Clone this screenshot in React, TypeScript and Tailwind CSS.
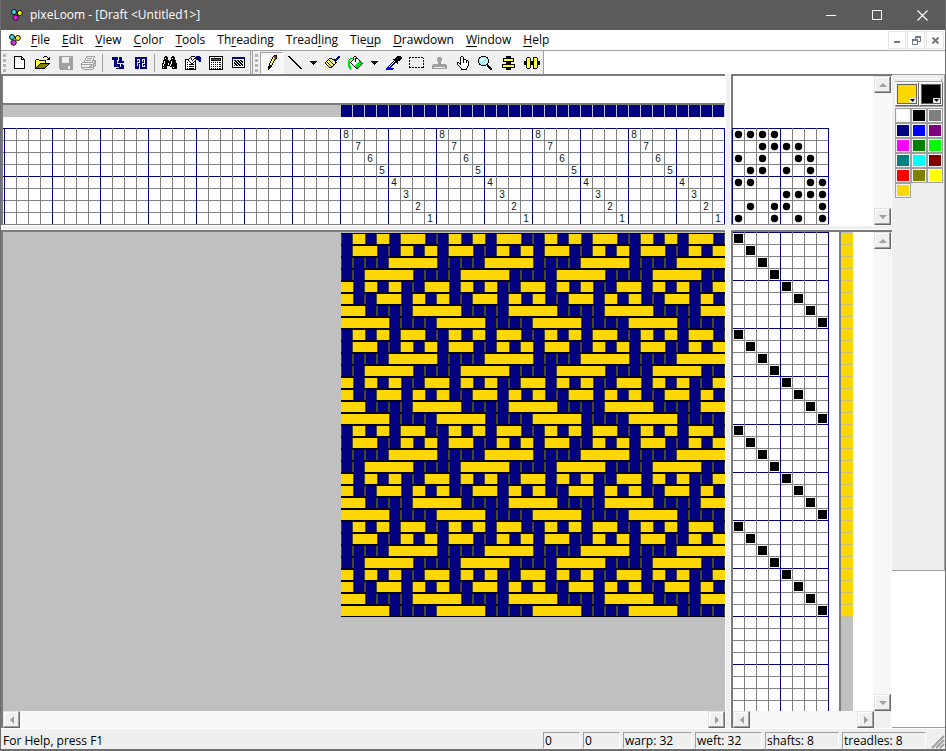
import React from "react";

const NAVY = "#000080";
const GOLD = "#ffd700";

const INK: Record<string, string> = {
  K: "#000000", W: "#ffffff", Y: "#ffff30", O: "#808000", G: "#a0a0a0", N: "#000080",
  B: "#0000e0", R: "#b02020", L: "#00e020", C: "#a8f4f8", D: "#606060",
};

function Pixels({ rows }: { rows: string[] }) {
  const w = Math.max(...rows.map((r) => r.length));
  return (
    <svg width={w} height={rows.length} shapeRendering="crispEdges" aria-hidden="true" className="shrink-0">
      {rows.flatMap((row, y) =>
        [...row].map((c, x) => (INK[c] ? <rect key={`${x}-${y}`} x={x} y={y} width="1" height="1" fill={INK[c]} /> : null)),
      )}
    </svg>
  );
}

const newDoc = [
  "KKKKKKKK...", "KWWWWWWKK..", "KWWWWWWKWK.", "KWWWWWWKKKK", "KWWWWWWWWWK", "KWWWWWWWWWK", "KWWWWWWWWWK",
  "KWWWWWWWWWK", "KWWWWWWWWWK", "KWWWWWWWWWK", "KWWWWWWWWWK", "KWWWWWWWWWK", "KKKKKKKKKKK",
];
const openFolder = [
  ".........KKK...", "........K...K.K", ".............KK", ".KKK........KKK", "KYWYKKKKKKK....", "KWYWYWYWYWK....", "KYWYWYWYWYK....",
  "KWYWYKKKKKKKKKK", "KYWYKOOOOOOOOK.", "KWYKOOOOOOOOK..", "KYKOOOOOOOOK...", "KKOOOOOOOOK....", "KKKKKKKKKK.....",
];
const save = [
  "GGGGGGGGGGGGGG", "GGG.......G.GG", "GGG.......GGGG", "GGG.......GGGG", "GGG.......GGGG", "GGG.......GGGG", "GGG.......GGGG",
  "GGGGGGGGGGGGGG", "GGGGGGGGGGGGGG", "GGGGGGGGGGGGGG", "GGGGGGGGG..GGG", "GGGGGGGGG..GGG", "GGGGGGGGG..GGG", ".GGGGGGGGGGGGG",
];
const print = [
  ".....GGGGGGGGG.", ".....G.......G.", "....G.GGGGG.G..", "....G.......G..", "...G.GGGGG.GGGG", "...G.......G.GG", ".GGGGGGGGGGG.GG",
  "G...........GGG", "GGGGGGGGGGGGG.G", "G.........G.GGG", "G.......GGG.GG.", "GGGGGGGGGGGGG..", ".G..........G..", "..GGGGGGGGGG...",
];
const loomA = [
  "NNNNNN.NNN..", "NNNNNN.NNN..", "NNNNNN.NNN..", "..NNN..NNN..", "..NNN.NNNNNN", "..NNN.NNNNNN", "..NNN.......",
  "..NNNNNN.NN.", "..NNNNNN.NNN", "..NNNNNN.NNN", ".......NNNNN", "....NNNNNNNN",
];
const loomB = [
  "NNNNNNNNNNNN", "NNNNNNNNNNNN", "NN...NN...NN", "NN.N.NN.N.NN", "NNNN.NN.N.NN", "NN...NNNN.NN", "NN.NNNN...NN",
  "NN.N.NN.NNNN", "NN.N.NN.N.NN", "NNNN.NN...NN", "NNNN.NNNNNNN", "NNNN.NNNNNNN",
];
const binoculars = [
  "...KK.....KK...", "..KKKK...KKKK..", "..KWKK...KWKK..", "..KKKK...KKKK..", ".KKKKKK.KKKKKK.", ".KWKKKKKKWKKKK.", ".KWKKKKKKWKKKK.",
  "KKWKKKWKKWKKKKK", "KWKKKKWKWKKKKKK", "KWKKKKKKWKKKKKK", "KKKKK...KKKKKKK", "KWKKK.....KWKKK", "KKKKK.....KKKKK",
];
const props = [
  "......KKKK.NNNN.", ".....KWWWWKNNNNN", "....KWKWWKKKNNNN", "KKKKWWKWKWWKKNNN", "KWWKWWWKWWK..NNN", "KWWWKWWWWKK...NN", "KWKWWKWWKWK.....",
  "KWWWWWKKWWK.....", "KWKWKKKKKWK.....", "KWWWWWWWWWK.....", "KWKWKKKKKWK.....", "KWWWWWWWWWK.....", "KWKWKKKKKWK.....", "KKKKKKKKKKK.....",
];
const calculator = [
  "KKKKKKKKKKKKKK", "KWWWWWWWWWWWWK", "KWKKKKKKKKKKWK", "KWKDDDDDDDDKWK", "KWKKKKKKKKKKWK", "KWWWWWWWWWWWWK", "KWKWKWKWKWKKWK",
  "KWWWWWWWWWWWWK", "KWKWKWKWKWKKWK", "KWWWWWWWWWWWWK", "KWKWKWKWKWKKWK", "KWWWWWWWWWWWWK", "KWKWKWKWKWKKWK", "KKKKKKKKKKKKKK",
];
const hatch = [
  "NNNNNNNNNNNNN", "NNNNNNNNNNNNN", "KWWWWWWWWWWWK", "KWKKWKKWKKWWK", "KWWKKWKKWKKWK", "KWKWKKWKKWKWK", "KWKKWKKWKKWWK",
  "KWWKKWKKWKKWK", "KWKWKKWKKWKWK", "KWWWWWWWWWWWK", "KKKKKKKKKKKKK",
];
const pencil = [
  ".......KKK", "......KRRK", ".....KYRRK", ".....KYYRK", "....KYYKK.", "....KYYK..", "...KYYK...", "...KYYK...", "..KYYK....",
  "..KYYK....", "..KKK.....", ".KKKK.....", ".KKK......", ".KK.......", ".K........",
];
const line = Array.from({ length: 13 }, (_, i) => ".".repeat(i) + "KK");
const arrow = ["KKKKKKK", ".KKKKK.", "..KKK..", "...K..."];
const brush = [
  ".............NN", "............NNN", "....KKK....NNN.", "...KYYWKKKNNN..", "..KYKYYWYKNN...", ".KYWYKYYWYK....", "KYKWYYKYYWKK...",
  "KYYKWYYKYYK....", ".KYYKWYYKK.....", "..KYYKWYK......", "...KYYKK.......", "YY..KKK........", "YYY............", "YYYYY..........",
];
const bucket = [
  "......KK........", ".....K..K.......", "..LLLK.KKK......", ".LL..KWKWWK.....", "LL..KWWKWWWK....", "LL.KWWWKWWWLK...", "LLKWWWWWWWLLLK..",
  "LL.KWWWWWLLLLLK.", "LL..KWWWLLLLLK..", "LL...KWLLLLLK...", "LLL...KLLLLK....", ".LL....KLLK.....", ".LL.....KK......", "..L.............",
];
const dropper = [
  "...........KKKK.", "..........KKKKKK", ".........KKKKKKK", ".......KKKKKKKK.", "........KKKKKK..", ".......KWKKK....", "......KWNKKK....",
  ".....KWNK..K....", "....KWNK........", "...KWNK.........", "..BWNB..........", ".BNBB...........", "BBBBBBBB........", "BBBBBBB.........",
];
const marquee = [
  "KK.KK.KK.KK.KK.", "K.............K", "...............", "K.............K", "K.............K", "...............", "K.............K",
  "K.............K", "...............", "K.............K", "KK.KK.KK.KK.KKK",
];
const stamp = [
  "......GGG......", ".....GGGGG.....", ".....GGGGG.....", ".....GGGGG.....", "......GGG......", "......GGG......", "......GGG......",
  ".GGGGGGGGGGGGG.", "GGGGGGGGGGGGGGG", "GGGGGGGGGGGGGGG", "GG...........GG", "GGGGGGGGGGGGGGG",
];
const hand = [
  "....KK......", "...KWWK.....", "...KWWK.....", "...KWWKKK...", "...KWWKWWKK.", "...KWWKWWKWK", "KK.KWWKWWKWK", "KWKKWWWWWWWK",
  "KWWKWWWWWWWK", ".KWWWWWWWWWK", "..KWWWWWWWK.", "...KWWWWWWK.", "....KWWWWK..", "....KKKKKK..",
];
const magnifier = [
  "...KKKKK.......", ".KKCCCCCKK.....", ".KCCWWCCCK.....", "KCCWWCCCCCK....", "KCWWCCCCCCK....", "KCCCCCCCCCK....", "KCCCCCCCWCK....",
  ".KCCCCCWCK.....", ".KKCCCCCKK.....", "...KKKKK.KK....", ".........KKK...", "..........KKK..", "...........KKK.", "............KK.",
];
const tieVertical = [
  "....KKKKK....", "....KKKKK....", ".KKKKKKKKKKK.", ".KYYYYYYYYYK.", ".KYYYYYYYYYK.", ".KKKKKKKKKKK.", "....KKKKK....",
  "....KKKKK....", "KKKKKKKKKKKKK", "KYYYYYYYYYYYK", "KYYYYYYYYYYYK", "KKKKKKKKKKKKK", "....KKKKK....", "....KKKKK....",
];
const tieHorizontal = [
  "...KKK...KKKK...", "..KYYYK..KYYYK..", "..KYYYK..KYYYK..", "..KYYYK..KYYYK..", "KKKYYYKKKKYYYKKK", "KKKYYYKKKKYYYKKK", "KKKYYYKKKKYYYKKK",
  "KKKYYYKKKKYYYKKK", "..KYYYK..KYYYK..", "..KYYYK..KYYYK..", "..KYYYK..KYYYK..", "...KKK...KKKK...",
];

function AppIcon() {
  return (
    <svg width="12" height="12" viewBox="0 0 12 12" aria-hidden="true" className="shrink-0">
      <g stroke="#111" strokeWidth="1">
        <circle cx="3" cy="3" r="2.5" fill="#30e0e8" />
        <circle cx="8.8" cy="4" r="2.5" fill="#f4f020" />
        <circle cx="4.6" cy="8.6" r="2.7" fill="#e020e0" />
      </g>
    </svg>
  );
}

const menus: [string, string, string][] = [
  ["", "F", "ile"], ["", "E", "dit"], ["", "V", "iew"], ["", "C", "olor"], ["", "T", "ools"], ["Th", "r", "eading"],
  ["Tread", "l", "ing"], ["Tie", "u", "p"], ["", "D", "rawdown"], ["", "W", "indow"], ["", "H", "elp"],
];

function Tool({ label, rows, narrow, pressed, disabled }: { label: string; rows: string[]; narrow?: boolean; pressed?: boolean; disabled?: boolean }) {
  return (
    <button
      type="button"
      aria-label={label}
      disabled={disabled}
      className={`flex h-[22px] shrink-0 items-center justify-center ${narrow ? "w-[15px]" : "w-[23px]"} ${
        pressed ? "border border-white border-t-[#a0a0a0] border-l-[#a0a0a0] bg-[#f7f7f7]" : ""
      }`}
    >
      <Pixels rows={rows} />
    </button>
  );
}

const Divider = () => <span className="mr-[3px] ml-[2px] h-[18px] w-px shrink-0 bg-[#a0a0a0]" />;
const Gripper = () => <span className="h-[18px] w-[3px] shrink-0 bg-[repeating-linear-gradient(#b4b4b4_0_3px,#f8f8f8_3px_5px)]" />;

function ScrollButton({ dir }: { dir: "up" | "down" | "left" | "right" }) {
  const turn = { up: "rotate-180", down: "", left: "rotate-90", right: "-rotate-90" }[dir];
  return (
    <button
      type="button"
      aria-label={`Scroll ${dir}`}
      className="flex size-[17px] shrink-0 items-center justify-center border border-t-[#e3e3e3] border-r-[#696969] border-b-[#696969] border-l-[#e3e3e3] bg-[#f0f0f0] shadow-[inset_-1px_-1px_#a0a0a0,inset_1px_1px_#fff]"
    >
      <svg width="8" height="4" className={turn} aria-hidden="true">
        <path d="M0 0h8L4 4z" fill="#a0a0a0" />
      </svg>
    </button>
  );
}

const track = "bg-[repeating-conic-gradient(#f0f0f0_0_25%,#fff_0_50%)] bg-size-[2px_2px]";

function VerticalBar() {
  return (
    <div className={`flex w-[17px] shrink-0 flex-col justify-between ${track}`}>
      <ScrollButton dir="up" />
      <ScrollButton dir="down" />
    </div>
  );
}
function HorizontalBar() {
  return (
    <div className={`flex h-[17px] justify-between ${track}`}>
      <ScrollButton dir="left" />
      <ScrollButton dir="right" />
    </div>
  );
}

const range = (n: number) => Array.from({ length: n }, (_, i) => i);

const tieup = [[0, 1, 2, 3], [2, 3, 4, 5], [0, 2, 5, 6], [1, 2, 4, 6], [0, 1, 6, 7], [4, 5, 6, 7], [1, 3, 4, 7], [0, 3, 5, 7]];
const raised = (col: number, row: number) => tieup[col % 8].includes(row % 8);

/* Squared paper with 12px cells; every fourth rule is navy. */
function Rules({ cols, rows }: { cols: number; rows: number }) {
  const tone = (i: number) => (i % 4 === 0 ? NAVY : "#808080");
  const order = (n: number) => [...range(n + 1).filter((i) => i % 4), ...range(n + 1).filter((i) => i % 4 === 0)];
  return (
    <g>
      {order(rows).map((i) => (
        <rect key={`h${i}`} x="0" y={i * 12} width={cols * 12 + 1} height="1" fill={i === rows && rows === 8 ? "#808080" : tone(i)} />
      ))}
      {order(cols).map((i) => (
        <rect key={`v${i}`} x={i * 12} y="0" width="1" height={rows * 12} fill={tone(i)} />
      ))}
    </g>
  );
}

const THREAD_COLS = 160;
function Threading() {
  const start = (THREAD_COLS - 32) * 12;
  return (
    <svg width={THREAD_COLS * 12} height="97" role="img" aria-label="Threading" className="shrink-0">
      <g shapeRendering="crispEdges" transform="translate(-1 0)"><Rules cols={THREAD_COLS} rows={8} /></g>
      <g fontFamily="'Liberation Sans', Arial, sans-serif" fontSize="10" textAnchor="middle" fill="#101818">
        {range(32).map((i) => (
          <text key={i} x={start + i * 12 + 5} y={(i % 8) * 12 + 10}>{8 - (i % 8)}</text>
        ))}
      </g>
    </svg>
  );
}

function Drawdown() {
  return (
    <svg width="384" height="384" shapeRendering="crispEdges" role="img" aria-label="Drawdown" className="shrink-0">
      <rect width="384" height="384" fill="#000010" />
      {range(32).flatMap((r) =>
        range(32).map((c) => {
          const x = c * 12;
          const y = r * 12;
          if (!raised(c, r)) return <rect key={`${c}-${r}`} x={x} y={y + 1} width="12" height="10" fill={GOLD} />;
          const top = r > 0 && raised(c, r - 1) ? 0 : 1;
          const bottom = r < 31 && raised(c, r + 1) ? 12 : 11;
          return (
            <g key={`${c}-${r}`}>
              <rect x={x} y={y + 1} width="12" height="10" fill="#484830" />
              <rect x={x + 1} y={y + top} width="10" height={bottom - top} fill={NAVY} />
            </g>
          );
        }),
      )}
    </svg>
  );
}

function Tieup() {
  return (
    <svg width="97" height="97" role="img" aria-label="Tieup" className="-ml-px block shrink-0">
      <g shapeRendering="crispEdges"><Rules cols={8} rows={8} /></g>
      {tieup.flatMap((cols, r) => cols.map((c) => <circle key={`${c}-${r}`} cx={c * 12 + 6.5} cy={r * 12 + 6.5} r="3.7" />))}
    </svg>
  );
}

function Treadling() {
  return (
    <svg width="97" height="1200" shapeRendering="crispEdges" role="img" aria-label="Treadling" className="-ml-px block shrink-0">
      <Rules cols={8} rows={100} />
      {range(32).map((r) => <rect key={r} x={(r % 8) * 12 + 2} y={r * 12 + 2} width="9" height="9" />)}
    </svg>
  );
}

const swatches: [string, string][] = [
  ["White", "bg-white"], ["Black", "bg-black"], ["Gray", "bg-[#808080]"], ["Navy", "bg-[#000080]"], ["Blue", "bg-[#0000ff]"],
  ["Purple", "bg-[#800080]"], ["Magenta", "bg-[#ff00ff]"], ["Green", "bg-[#008000]"], ["Lime", "bg-[#00ff00]"],
  ["Teal", "bg-[#008080]"], ["Cyan", "bg-[#00ffff]"], ["Maroon", "bg-[#800000]"], ["Red", "bg-[#ff0000]"],
  ["Olive", "bg-[#808000]"], ["Yellow", "bg-[#ffff00]"], ["Gold", "bg-[#ffd700]"],
];

function CurrentColor({ label, tone }: { label: string; tone: string }) {
  return (
    <button type="button" aria-label={label} className="flex h-6 w-6 border border-t-white border-r-[#696969] border-b-[#696969] border-l-white p-px">
      <span className={`flex flex-1 items-end justify-end border border-[#606060] ${tone}`}>
        <span className="flex h-[5px] w-[7px] items-center justify-center bg-[#e8e8e8]">
          <svg width="5" height="3" aria-hidden="true"><path d="M0 0h5L2.500 3z" /></svg>
        </span>
      </span>
    </button>
  );
}

function Palette() {
  return (
    <aside aria-label="Palette" className="flex w-[53px] shrink-0 flex-col border-t border-[#a0a0a0] bg-white">
      <div className="h-[496px] border-r border-b border-[#a0a0a0] bg-[#efefef] pl-[3px]">
        <div className="mt-[3px] mr-[2px] h-[3px] border-t border-r border-white border-r-[#a0a0a0]" />
        <div className="flex h-[26px] w-12 border-y border-[#a0a0a0]">
          <CurrentColor label="Foreground" tone="bg-[#ffd700]" />
          <CurrentColor label="Background" tone="bg-black" />
        </div>
        <div className="mt-px grid w-12 grid-cols-3">
          {swatches.map(([name, tone]) => (
            <button key={name} type="button" aria-label={name} className="h-[15px] border border-[#a0a0a0]">
              <span className={`block h-[13px] border border-[#f4f4f4] ${tone}`} />
            </button>
          ))}
        </div>
      </div>
      <div className="flex-1" />
      <div className="h-px bg-[#a0a0a0]" />
    </aside>
  );
}

const pane = "border-t-2 border-l-2 border-[#7a7a7a] bg-white";

function StatusCell({ children, size }: { children: React.ReactNode; size: string }) {
  return <span className={`h-[17px] shrink-0 border border-white border-t-[#a0a0a0] border-l-[#a0a0a0] pl-px leading-4 ${size}`}>{children}</span>;
}

const childButton = "flex h-[18px] w-[18px] items-center justify-center border border-[#e4e4e4]";

export default function App() {
  return (
    <div className="flex h-screen flex-col overflow-hidden border-r border-l border-[#6e6e6e] bg-[#efefef] font-['Open_Sans','Noto_Sans',sans-serif] text-xs text-black">
      <header className="flex h-[30px] shrink-0 items-center bg-[#5d5b59] pl-[10px] text-white">
        <AppIcon />
        <h1 className="ml-[7px] flex-1">pixeLoom - [Draft &lt;Untitled1&gt;]</h1>
        <button type="button" aria-label="Minimize" className="flex h-full w-[46px] items-center justify-center">
          <span className="h-px w-[10px] bg-white" />
        </button>
        <button type="button" aria-label="Maximize" className="flex h-full w-[45px] items-center justify-center">
          <span className="size-[10px] border border-white" />
        </button>
        <button type="button" aria-label="Close" className="flex h-full w-[46px] items-center justify-center">
          <svg width="11" height="11" aria-hidden="true"><path d="M.5.5l10 10M10.500.5l-10 10" stroke="#fff" strokeWidth="1.200" /></svg>
        </button>
      </header>

      <nav className="flex h-[21px] shrink-0 items-center border-b border-[#a0a0a0] bg-white pl-2">
        <AppIcon />
        <div className="ml-1 flex flex-1">
          {menus.map(([before, key, after]) => (
            <button key={before + key + after} type="button" className="px-[6px] leading-5">
              {before}
              <span className="underline decoration-1 underline-offset-2 [text-decoration-skip-ink:none]">{key}</span>
              {after}
            </button>
          ))}
        </div>
        <div className="flex gap-px pr-px">
          <button type="button" aria-label="Minimize draft" className={childButton}><span className="mt-1 h-[2px] w-[6px] bg-[#707880]" /></button>
          <button type="button" aria-label="Restore draft" className={childButton}>
            <svg width="9" height="9" shapeRendering="crispEdges" aria-hidden="true" fill="none" stroke="#6c7c8c">
              <path d="M.5 4.500h5v4h-5zM0 3.500h6M3 2.500v-2h5v5h-2M3 1.500h5" />
            </svg>
          </button>
          <button type="button" aria-label="Close draft" className={childButton}>
            <svg width="7" height="7" aria-hidden="true"><path d="M.5.5l6 6M6.500.5l-6 6" stroke="#707880" strokeWidth="2" /></svg>
          </button>
        </div>
      </nav>

      <div className="flex h-[23px] shrink-0 bg-white">
        <div role="toolbar" className="flex items-center border-r border-[#a0a0a0] bg-[#efefef] pl-[2px]">
          <Gripper />
          <span className="w-[2px]" />
          <Tool label="New" rows={newDoc} />
          <Tool label="Open" rows={openFolder} />
          <Tool label="Save" rows={save} disabled />
          <Tool label="Print" rows={print} disabled />
          <Divider />
          <Tool label="Rising shed" rows={loomA} />
          <Tool label="Sinking shed" rows={loomB} />
          <Divider />
          <Tool label="Find" rows={binoculars} />
          <Tool label="Properties" rows={props} />
          <Tool label="Calculator" rows={calculator} />
          <Tool label="Pattern" rows={hatch} />
          <span className="h-full w-[3px] border-x border-[#a0a0a0]" />
          <span className="w-[2px]" />
          <Gripper />
          <span className="w-[2px]" />
          <Tool label="Pencil" rows={pencil} pressed />
          <Tool label="Line" rows={line} />
          <Tool label="Line options" rows={arrow} narrow />
          <Tool label="Brush" rows={brush} />
          <Tool label="Fill" rows={bucket} />
          <Tool label="Fill options" rows={arrow} narrow />
          <Tool label="Pick color" rows={dropper} />
          <Tool label="Select" rows={marquee} />
          <Tool label="Stamp" rows={stamp} disabled />
          <Tool label="Pan" rows={hand} />
          <Tool label="Zoom" rows={magnifier} />
          <Tool label="Tie vertically" rows={tieVertical} />
          <Tool label="Tie horizontally" rows={tieHorizontal} />
        </div>
      </div>

      <main className="flex min-h-0 flex-1">
        <div className="flex min-w-0 flex-1 flex-col">
          <div className="flex h-[151px] shrink-0">
            <section className={`flex min-w-0 flex-1 flex-col overflow-hidden ${pane}`}>
              <div className="h-[27px] shrink-0" />
              <div className="flex h-[14px] shrink-0 border-t-2 border-[#7a7a7a] bg-[#c0c0c0]">
                <div className="flex-1" />
                <div className="h-3 w-96 bg-[repeating-linear-gradient(90deg,#000080_0_11px,#c0c0f0_11px_12px)]" />
              </div>
              <div className="mt-[11px] flex justify-end">
                <Threading />
              </div>
            </section>
            <div className="w-[6px] shrink-0 border-x border-white bg-[#efefef]" />
            <section className={`flex w-[161px] shrink-0 justify-between pr-px ${pane}`}>
              <div className="pt-[52px]"><Tieup /></div>
              <VerticalBar />
            </section>
          </div>
          <div className="h-[5px] shrink-0 border-y border-white bg-[#efefef]" />
          <div className="flex min-h-0 flex-1">
            <section className={`flex min-w-0 flex-1 flex-col ${pane}`}>
              <div className="flex min-h-0 flex-1 items-start justify-end overflow-hidden bg-[#c0c0c0] pt-px">
                <Drawdown />
              </div>
              <HorizontalBar />
            </section>
            <div className="w-[6px] shrink-0 border-x border-white bg-[#efefef]" />
            <section className={`flex w-[161px] shrink-0 flex-col pr-px ${pane}`}>
              <div className="flex min-h-0 flex-1 overflow-hidden">
                <div className="w-24"><Treadling /></div>
                <div className="ml-[10px] w-[14px] border-l-2 border-[#808080] bg-[#c0c0c0] pt-px">
                  <div className="h-96 bg-[repeating-linear-gradient(#ffd700_0_11px,#c8c080_11px_12px)]" />
                </div>
                <div className="flex-1" />
                <VerticalBar />
              </div>
              <div className="flex">
                <div className="flex-1"><HorizontalBar /></div>
                <div className="size-[17px] bg-[#f0f0f0]" />
              </div>
            </section>
          </div>
        </div>
        <Palette />
      </main>

      <footer className="flex h-[23px] shrink-0 items-center gap-[3px] border-t border-b-2 border-t-white border-b-[#6e6e6e] bg-[#efefef] pt-[3px] pl-[2px]">
        <span className="flex-1">For Help, press F1</span>
        <StatusCell size="w-[37px]">0</StatusCell>
        <StatusCell size="w-[37px]">0</StatusCell>
        <StatusCell size="w-[69px]">warp: 32</StatusCell>
        <StatusCell size="w-[67px]">weft: 32</StatusCell>
        <StatusCell size="w-[74px]">shafts: 8</StatusCell>
        <StatusCell size="w-[84px]">treadles: 8</StatusCell>
        <svg width="16" height="16" aria-hidden="true" className="self-end">
          <path d="M3 15L15 3M7 15l8-8M11 15l4-4" stroke="#a0a0a0" strokeWidth="2" />
        </svg>
      </footer>
    </div>
  );
}
